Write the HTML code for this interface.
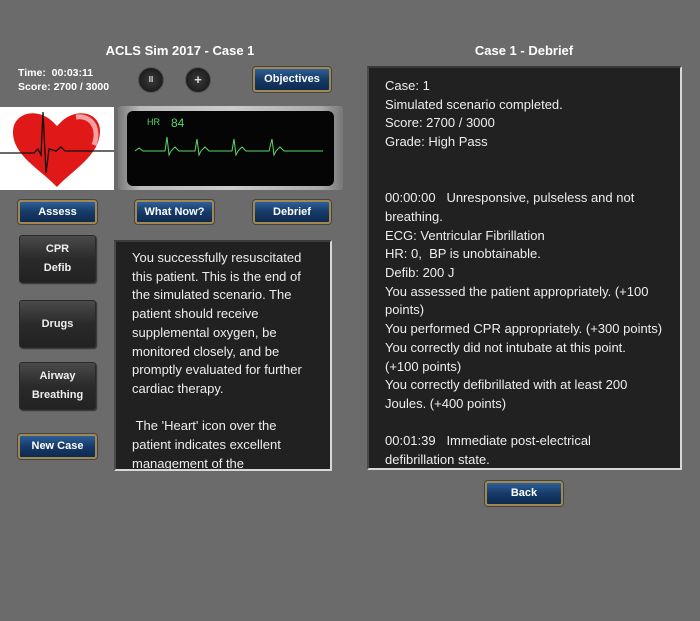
<!DOCTYPE html>
<html><head><meta charset="utf-8"><style>
*{margin:0;padding:0;box-sizing:border-box}
body{width:700px;height:621px;background:#6b6b6b;font-family:"Liberation Sans",sans-serif;position:relative;overflow:hidden}
.a{position:absolute}
.t{color:#fff;font-weight:bold;font-size:13px;text-align:center}
.btn{position:absolute;border:2px solid #a08850;border-radius:3px;background:linear-gradient(#2e5f98,#163a68 50%,#0e2a50);color:#fff;font-weight:bold;font-size:11px;text-align:center;box-shadow:0 0 0 1px #444}
.g{position:absolute;border:1px solid #2a2a2a;border-radius:3px;background:linear-gradient(#4a4a4a,#2a2a2a 50%,#222);color:#eee;font-weight:bold;font-size:11px;text-align:center;box-shadow:1px 1px 1px #333;line-height:19px}
.circ{position:absolute;width:26px;height:26px;border-radius:50%;background:radial-gradient(#3a3a3a,#111);border:1px solid #555;color:#ddd;font-size:13px;font-weight:bold;text-align:center;line-height:24px}
.box{position:absolute;background:#212121;border:2px solid #d8d8d8;border-top-color:#3a3a3a;border-left-color:#4a4a4a;color:#eee;font-size:13px;line-height:18.7px}
</style></head><body>
<div class="a t" style="left:60px;top:43px;width:240px">ACLS Sim 2017 - Case 1</div>
<div class="a t" style="left:368px;top:43px;width:312px">Case 1 - Debrief</div>
<div class="a" style="left:18px;top:66px;color:#fff;font-weight:bold;font-size:10.5px;line-height:14px">Time:&nbsp; 00:03:11<br>Score: 2700 / 3000</div>
<div class="circ" style="left:138px;top:67px;font-size:8px">II</div>
<div class="circ" style="left:185px;top:67px">+</div>
<div class="btn" style="left:253px;top:67px;width:78px;height:25px;line-height:21px">Objectives</div>
<div class="a" style="left:0;top:107px;width:114px;height:83px;background:#fff">
<svg width="114" height="83" viewBox="0 0 114 83">
<path d="M57 80 C40 62 12 48 13 24 C14 6 36 0 52 14 L57 19 L62 14 C78 0 100 6 100 24 C100 48 74 62 57 80Z" fill="#e01818"/>
<path d="M76 10 C92 8 100 22 94 38" stroke="#f5a0a0" stroke-width="5" fill="none"/>
<path d="M0 46 L34 46 L38 42 L41 48 L43 5 L46 66 L49 42 L56 44 L61 40 L65 44 L114 44" stroke="#111" stroke-width="1.3" fill="none"/>
</svg></div>
<div class="a" style="left:118px;top:106px;width:225px;height:84px;background:linear-gradient(90deg,#7a7a7a,#bbb 10%,#ccc 50%,#aaa 90%,#777);border-radius:3px"></div>
<div class="a" style="left:127px;top:111px;width:207px;height:75px;background:#050505;border-radius:6px">
<svg width="207" height="75"><text x="20" y="14" fill="#5bd66b" font-size="9" font-family="Liberation Sans">HR</text><text x="44" y="16" fill="#5bd66b" font-size="12" font-family="Liberation Sans">84</text>
<path d="M8 40 L12 37 L16 40 L34 40 L38 40 L40 26 L42 44 L44 40 L48 36 L52 40 L66 40 L68 40 L70 28 L72 44 L74 40 L78 36 L82 40 L105 40 L107 28 L109 44 L111 40 L115 36 L119 40 L142 40 L145 28 L147 44 L149 40 L153 36 L157 40 L196 40" stroke="#5bd66b" stroke-width="1" fill="none"/></svg></div>
<div class="btn" style="left:18px;top:200px;width:79px;height:24px;line-height:20px">Assess</div>
<div class="btn" style="left:135px;top:200px;width:79px;height:24px;line-height:20px">What Now?</div>
<div class="btn" style="left:253px;top:200px;width:78px;height:24px;line-height:20px">Debrief</div>
<div class="g" style="left:19px;top:235px;width:77px;height:48px;padding-top:4px">CPR<br>Defib</div>
<div class="g" style="left:19px;top:300px;width:77px;height:48px;line-height:46px">Drugs</div>
<div class="g" style="left:19px;top:362px;width:77px;height:48px;padding-top:4px">Airway<br>Breathing</div>
<div class="btn" style="left:18px;top:434px;width:79px;height:25px;line-height:21px">New Case</div>
<div class="box" style="left:114px;top:240px;width:218px;height:231px;padding:7px 0 0 16px;overflow:hidden">You successfully resuscitated<br>this patient. This is the end of<br>the simulated scenario. The<br>patient should receive<br>supplemental oxygen, be<br>monitored closely, and be<br>promptly evaluated for further<br>cardiac therapy.<br><br>&nbsp;The 'Heart' icon over the<br>patient indicates excellent<br>management of the</div>
<div class="box" style="left:367px;top:66px;width:315px;height:404px;padding:9px 0 0 16px;overflow:hidden">Case: 1<br>Simulated scenario completed.<br>Score: 2700 / 3000<br>Grade: High Pass<br><br><br>00:00:00 &nbsp;&nbsp;Unresponsive, pulseless and not<br>breathing.<br>ECG: Ventricular Fibrillation<br>HR: 0,&nbsp; BP is unobtainable.<br>Defib: 200 J<br>You assessed the patient appropriately. (+100<br>points)<br>You performed CPR appropriately. (+300 points)<br>You correctly did not intubate at this point.<br>(+100 points)<br>You correctly defibrillated with at least 200<br>Joules. (+400 points)<br><br>00:01:39 &nbsp;&nbsp;Immediate post-electrical<br>defibrillation state.</div>
<div class="btn" style="left:485px;top:481px;width:78px;height:25px;line-height:21px">Back</div>
</body></html>
